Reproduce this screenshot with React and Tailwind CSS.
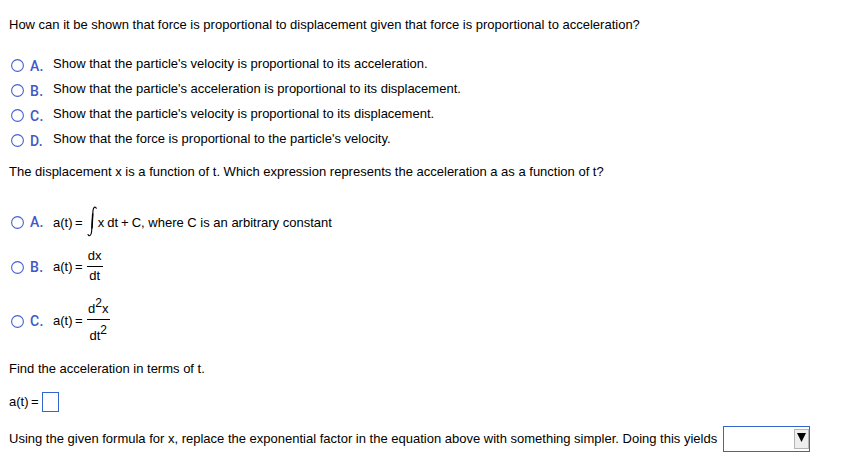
const textChoices = [
  { letter: "A.", text: "Show that the particle's velocity is proportional to its acceleration." },
  { letter: "B.", text: "Show that the particle's acceleration is proportional to its displacement." },
  { letter: "C.", text: "Show that the particle's velocity is proportional to its displacement." },
  { letter: "D.", text: "Show that the force is proportional to the particle's velocity." },
];

function Choice({ letter }) {
  return (
    <span className="flex w-11 shrink-0 items-center">
      <svg className="mr-1.5 ml-0.5 size-[13px] shrink-0" viewBox="0 0 13 13">
        <circle cx="6.5" cy="6.5" r="5.9" fill="white" stroke="#4660d0" strokeWidth="1.1" />
      </svg>
      <span className="font-[Roboto,sans-serif] text-[14px] leading-4 font-medium tracking-[0.3px] text-[#4058c8]">{letter}</span>
    </span>
  );
}

function Equals() {
  return <span className="[word-spacing:-1px]">a(t) =</span>;
}

function Power({ base, after }) {
  return (
    <span className="flex h-[15px] items-baseline leading-[15px]">
      {base}
      <span className="-translate-y-[6px] text-[12px] leading-none">2</span>
      {after}
    </span>
  );
}

function Fraction({ top, bottom, className }) {
  return (
    <span className={"ml-1 flex flex-col items-center leading-[15px] " + className}>
      <span className="pb-[3px]">{top}</span>
      <span className="h-px w-full bg-black" />
      {bottom}
    </span>
  );
}

export default function App() {
  return (
    <main className="h-[462px] w-[842px] overflow-hidden bg-white pt-[15px] pl-[9px] font-['Liberation_Sans',Arial,sans-serif] text-[13px] leading-5 whitespace-nowrap text-black">
      <p className="h-5">How can it be shown that force is proportional to displacement given that force is proportional to acceleration?</p>

      <div className="mt-4">
        {textChoices.map((choice) => (
          <div key={choice.letter} className="flex h-[25px] items-center">
            <span className="pt-1"><Choice letter={choice.letter} /></span>
            <span>{choice.text}</span>
          </div>
        ))}
      </div>

      <p className="mt-[11px] h-5">The displacement x is a function of t. Which expression represents the acceleration a as a function of t?</p>

      <div className="mt-[22px] flex h-9 items-center">
        <Choice letter="A." />
        <span className="pt-0.5"><Equals /></span>
        <svg className="-mt-px ml-1 h-[31px] w-[11px]" viewBox="0 0 11 31" fill="none" stroke="black" strokeLinecap="round">
          <path d="M9.3 2.2C8.2 .3 6.4 1 6 4.5L4.6 25.5C4.3 29.3 2.3 31 1 28.5" strokeWidth="1.1" />
          <path d="M5.7 8L5 22" strokeWidth="1.5" />
        </svg>
        <span className="pt-0.5">
          <span className="[word-spacing:-0.6px]">x dt + C</span>, where C is an arbitrary constant
        </span>
      </div>

      <div className="mt-[9px] flex h-9 items-center">
        <Choice letter="B." />
        <Equals />
        <Fraction top="dx" bottom={<span className="pt-px">dt</span>} className="-mt-1 w-4" />
      </div>

      <div className="mt-[14px] flex h-11 items-center">
        <Choice letter="C." />
        <Equals />
        <Fraction
          top={<Power base="d" after="x" />}
          bottom={<span className="pt-2"><Power base="dt" /></span>}
          className="-mb-px w-[23px]"
        />
      </div>

      <p className="mt-4 h-5">Find the acceleration in terms of t.</p>

      <label className="mt-[13px] flex h-5 items-center">
        <Equals />
        <input className="ml-[3px] h-5 w-[17px] border border-[#3366cc] outline-none" aria-label="a(t)" />
      </label>

      <div className="mt-[14px] flex h-[26px] items-center">
        <span>Using the given formula for x, replace the exponential factor in the equation above with something simpler. Doing this yields</span>
        <button className="ml-1.5 flex h-[26px] w-[87px] items-center justify-end border border-[#3366cc]" aria-label="Choose an answer">
          <span className="flex h-5 w-[15px] items-center justify-center border border-[#b5b5b5] bg-[#eeeeee] pb-[3px]">
            <svg className="h-[9px] w-[9px]" viewBox="0 0 9 9"><path d="M0 0H9L4.5 9Z" /></svg>
          </span>
        </button>
      </div>
    </main>
  );
}
